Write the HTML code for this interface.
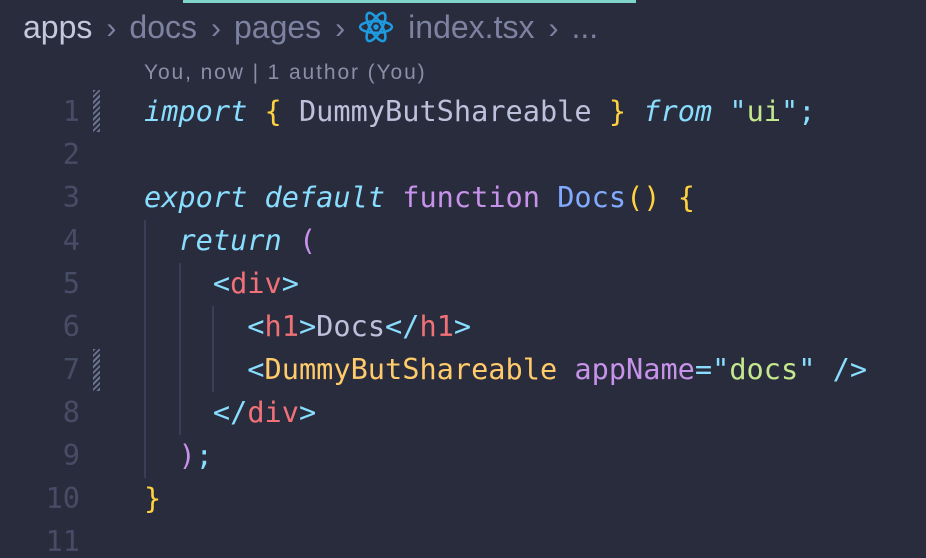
<!DOCTYPE html>
<html><head><meta charset="utf-8"><style>
html,body{margin:0;padding:0;width:926px;height:542px;overflow:hidden;background:#292c3c;}
.bar{position:absolute;left:183px;top:0;width:453px;height:3px;background:#81d4c9;}
.bc{position:absolute;left:23px;top:9px;font:32px "Liberation Sans",sans-serif;color:#7c82a0;white-space:pre;}
.bc .a{color:#c3c8dc}
.bc .sep{display:inline-block;margin:0 13px 0 14px;font-size:30px}
.blame{position:absolute;left:144px;top:61px;font:21px "Liberation Sans",sans-serif;color:#8a8fa8;letter-spacing:1.9px;white-space:pre}
.ln{position:absolute;left:0;width:80px;text-align:right;font:28.6px "DejaVu Sans Mono",monospace;color:#474d66;}
.code{position:absolute;left:144px;font:28.6px "DejaVu Sans Mono",monospace;white-space:pre;color:#bcc1dc;}
.k{color:#89ddff;font-style:italic}
.y{color:#ffd23f}.p{color:#c792ea}.b{color:#82aaff}.s{color:#c3e88d}.c{color:#89ddff}.r{color:#f07178}.o{color:#ffcb6b}
.g{position:absolute;width:2px;background:#3a3f57}
.m{position:absolute;left:93px;width:7px;background:repeating-linear-gradient(135deg,#6b7391 0 2px,transparent 2px 4px)}
</style></head><body>
<div class="bar"></div>
<div class="bc"><span class="a">apps</span><span class="sep">›</span>docs<span class="sep">›</span>pages<span class="sep">›</span><svg width="36" height="32" viewBox="-17 -15 34 30" style="vertical-align:-5px;margin-right:14px"><g fill="none" stroke="#1e9be0" stroke-width="2.4"><ellipse rx="15" ry="5.5"/><ellipse rx="15" ry="5.5" transform="rotate(60)"/><ellipse rx="15" ry="5.5" transform="rotate(120)"/></g><circle r="2.6" fill="#1e9be0"/></svg>index.tsx<span class="sep">›</span>...</div>
<div class="blame">You, now | 1 author (You)</div>
<div class="m" style="top:90px;height:42px"></div>
<div class="m" style="top:349px;height:42px"></div>
<div class="g" style="left:144px;top:220px;height:258px"></div>
<div class="g" style="left:179px;top:263px;height:172px"></div>
<div class="g" style="left:212px;top:306px;height:86px"></div>
<div class="ln" style="top:94px">1</div>
<div class="ln" style="top:137px">2</div>
<div class="ln" style="top:180px">3</div>
<div class="ln" style="top:223px">4</div>
<div class="ln" style="top:266px">5</div>
<div class="ln" style="top:309px">6</div>
<div class="ln" style="top:352px">7</div>
<div class="ln" style="top:395px">8</div>
<div class="ln" style="top:438px">9</div>
<div class="ln" style="top:481px">10</div>
<div class="ln" style="top:524px">11</div>
<div class="code" style="top:94px"><span class="k">import</span> <span class="y">{</span> DummyButShareable <span class="y">}</span> <span class="k">from</span> <span class="c">"</span><span class="s">ui</span><span class="c">";</span></div>
<div class="code" style="top:180px"><span class="k">export</span> <span class="k">default</span> <span class="p">function</span> <span class="b">Docs</span><span class="y">()</span> <span class="y">{</span></div>
<div class="code" style="top:223px">  <span class="k">return</span> <span class="p">(</span></div>
<div class="code" style="top:266px">    <span class="c">&lt;</span><span class="r">div</span><span class="c">&gt;</span></div>
<div class="code" style="top:309px">      <span class="c">&lt;</span><span class="r">h1</span><span class="c">&gt;</span>Docs<span class="c">&lt;/</span><span class="r">h1</span><span class="c">&gt;</span></div>
<div class="code" style="top:352px">      <span class="c">&lt;</span><span class="o">DummyButShareable</span> <span class="p">appName</span><span class="c">="</span><span class="s">docs</span><span class="c">"</span> <span class="c">/&gt;</span></div>
<div class="code" style="top:395px">    <span class="c">&lt;/</span><span class="r">div</span><span class="c">&gt;</span></div>
<div class="code" style="top:438px">  <span class="p">)</span><span class="c">;</span></div>
<div class="code" style="top:481px"><span class="y">}</span></div>
</body></html>
